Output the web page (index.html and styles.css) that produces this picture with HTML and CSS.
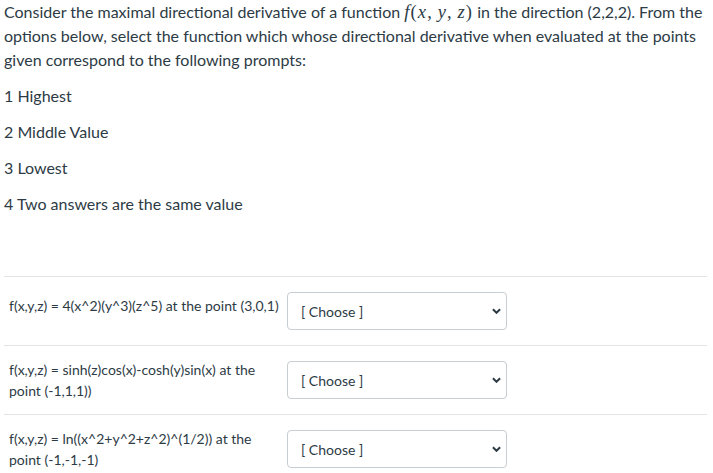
FILE: index.html
```html
<!DOCTYPE html>
<html>
<head>
<meta charset="utf-8">
<link rel="stylesheet" href="styles.css">
</head>
<body>
<div class="question">
  <div class="prompt">
    <p>Consider the maximal directional derivative of a function <span class="math"><i>f</i>(<i>x</i>,&#8201;<i>y</i>,&#8201;<i>z</i>)</span> in the direction (2,2,2). From the options below, select the function which whose directional derivative when evaluated at the points given correspond to the following prompts:</p>
    <p>1 Highest</p>
    <p>2 Middle Value</p>
    <p>3 Lowest</p>
    <p>4 Two answers are the same value</p>
  </div>
  <div class="answers">
    <div class="row single">
      <div class="label">f(x,y,z) = 4(x^2)(y^3)(z^5) at the point (3,0,1)</div>
      <div class="select"><span>[ Choose ]</span><svg class="chev" viewBox="0 0 10 6" width="9" height="6"><path d="M1 1 L5 5 L9 1" fill="none" stroke="#2d3b45" stroke-width="2.2"/></svg></div>
    </div>
    <div class="row">
      <div class="label">f(x,y,z) = sinh(z)cos(x)-cosh(y)sin(x) at the point (-1,1,1))</div>
      <div class="select"><span>[ Choose ]</span><svg class="chev" viewBox="0 0 10 6" width="9" height="6"><path d="M1 1 L5 5 L9 1" fill="none" stroke="#2d3b45" stroke-width="2.2"/></svg></div>
    </div>
    <div class="row">
      <div class="label">f(x,y,z) = ln((x^2+y^2+z^2)^(1/2)) at the point (-1,-1,-1)</div>
      <div class="select"><span>[ Choose ]</span><svg class="chev" viewBox="0 0 10 6" width="9" height="6"><path d="M1 1 L5 5 L9 1" fill="none" stroke="#2d3b45" stroke-width="2.2"/></svg></div>
    </div>
  </div>
</div>
</body>
</html>
```
FILE: styles.css
```css
html, body {
  margin: 0;
  padding: 0;
  background: #ffffff;
}
body {
  font-family: Lato, "Open Sans", sans-serif;
  color: #2d3b45;
}
.question {
  padding: 0 6px 0 4px;
}
.prompt p {
  margin: 0 0 12px 0;
  font-size: 16px;
  line-height: 24px;
}
.math {
  font-family: "Liberation Serif", "DejaVu Serif", serif;
  font-size: 18.5px;
  line-height: 1;
  letter-spacing: 1.1px;
}
.math i {
  font-style: italic;
}
.answers {
  margin-top: 60px;
}
.row {
  display: flex;
  align-items: center;
  border-top: 1px solid #e2e4e6;
  padding: 13px 0 13px 5px;
}
.label {
  width: 270px;
  font-size: 14px;
  line-height: 21px;
  margin-right: 8px;
}
.single .label {
  padding-bottom: 12px;
}
.select {
  width: 220px;
  height: 38px;
  margin: 2px 0;
  box-sizing: border-box;
  border: 1px solid #c7cdd1;
  border-radius: 4px;
  display: flex;
  align-items: center;
  justify-content: space-between;
  padding: 0 5px 0 13px;
  font-size: 14px;
}
.chev {
  display: block;
}
```
